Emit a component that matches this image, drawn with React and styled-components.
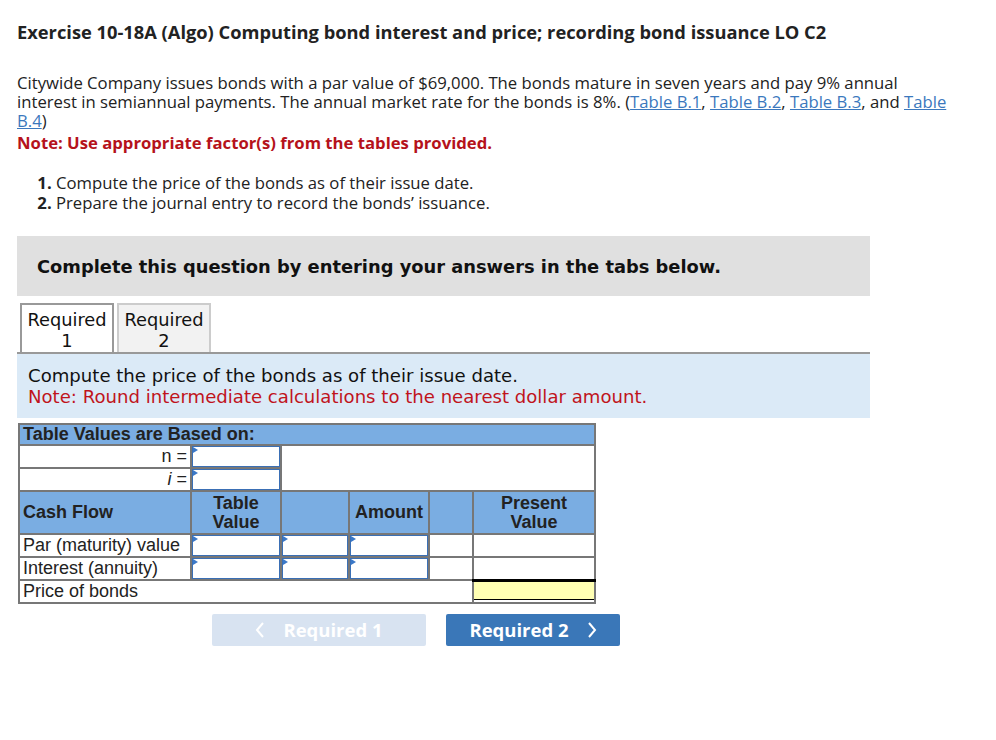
import styled, { createGlobalStyle } from 'styled-components';

const GlobalStyle = createGlobalStyle`
  body {
    margin: 0;
    background: #fff;
  }
`;

const Page = styled.div`
  padding: 20px 0 0 17px;
  width: 853px;
  font-family: 'Open Sans', Lato, sans-serif;
  color: #222;
`;

const Title = styled.h1`
  margin: 0;
  font-size: 18.3px;
  font-weight: 700;
  line-height: 24px;
`;

const Intro = styled.p`
  margin: 29px 0 0;
  width: 940px;
  font-size: 16.7px;
  line-height: 19px;
`;

const TableLink = styled.a`
  color: #3b78bd;
  text-decoration: underline;
`;

const Note = styled.div`
  margin-top: 3px;
  color: #b5121b;
  font-weight: 700;
  font-size: 16.7px;
  line-height: 19px;
`;

const Steps = styled.ol`
  margin: 21px 0 0;
  padding-left: 39px;
  font-size: 16.7px;
  line-height: 20px;
  li::marker {
    font-weight: 700;
  }
`;

const Banner = styled.div`
  margin-top: 23px;
  height: 60px;
  display: flex;
  align-items: center;
  padding-left: 20px;
  background: #e0e0e0;
  font-family: 'DejaVu Sans', Verdana, sans-serif;
  font-weight: 700;
  font-size: 17.85px;
  color: #111;
`;

const TabBar = styled.div`
  margin-top: 7px;
  display: flex;
  gap: 3px;
  padding-left: 3px;
  border-bottom: 2px solid #999;
`;

const Tab = styled.div`
  width: 94px;
  height: 49px;
  box-sizing: border-box;
  border: 2px solid ${(p) => (p.$active ? '#999' : '#ccc')};
  border-bottom: none;
  background: ${(p) => (p.$active ? '#fff' : '#f2f2f2')};
  font-family: 'DejaVu Sans', Verdana, sans-serif;
  font-size: 17.8px;
  line-height: 21px;
  text-align: center;
  color: #111;
  padding-top: 4px;
`;

const Instruction = styled.div`
  background: #dbeaf7;
  padding: 11px 11px 10px;
  height: 64px;
  box-sizing: border-box;
  font-family: 'DejaVu Sans', Verdana, sans-serif;
  font-size: 18.1px;
  line-height: 21px;
  color: #111;
`;

const RedLine = styled.div`
  color: #c0141c;
`;

const Grid = styled.table`
  margin-top: 5px;
  margin-left: 1px;
  border-collapse: collapse;
  width: 576px;
  table-layout: fixed;
  font-family: 'Liberation Sans', Arial, sans-serif;
  font-size: 18px;
  color: #222;
  td,
  th {
    border: 2px solid #777;
    padding: 0;
    height: 19px;
  }
`;

const HeadCell = styled.th`
  background: #7aade2;
  font-weight: 700;
  text-align: ${(p) => p.$align || 'center'};
  padding-left: ${(p) => (p.$align === 'left' ? '3px' : '0')} !important;
  line-height: 19px;
  vertical-align: middle;
`;

const TallHeadRow = styled.tr`
  th {
    height: 41px;
  }
`;

const Label = styled.td`
  text-align: ${(p) => p.$align || 'left'};
  padding: 0 3px !important;
  line-height: 19px;
  white-space: nowrap;
`;

const InputCell = styled.td`
  padding: 0 !important;
`;

const Entry = styled.div`
  position: relative;
  height: 19px;
  border: 1.5px solid #3a6fb5;
  background: #fff;
  &::before {
    content: '';
    position: absolute;
    left: 0;
    top: 0;
    border-top: 3px solid transparent;
    border-bottom: 3px solid transparent;
    border-left: 5px solid #3a78c8;
  }
`;

const Total = styled.td`
  background: #ffffb3;
  border-top: 3px solid #000 !important;
  box-shadow: inset 0 -2px 0 #fff, inset 0 -3px 0 #000;
  height: 20px !important;
`;

const Nav = styled.div`
  margin-top: 10px;
  margin-left: 195px;
  display: flex;
  gap: 20px;
`;

const NavButton = styled.button`
  height: 32px;
  width: ${(p) => p.$w}px;
  border: none;
  border-radius: 2px;
  background: ${(p) => (p.$disabled ? '#d8e3f1' : '#3a77b8')};
  color: #fff;
  font-family: 'Open Sans', Lato, sans-serif;
  font-weight: 700;
  font-size: 18.5px;
  display: flex;
  align-items: center;
  justify-content: center;
  gap: 18px;
  cursor: ${(p) => (p.$disabled ? 'default' : 'pointer')};
`;

const Chevron = ({ dir }) => (
  <svg width="10" height="16" viewBox="0 0 10 16">
    <path
      d={dir === 'left' ? 'M8 1 L2 8 L8 15' : 'M2 1 L8 8 L2 15'}
      fill="none"
      stroke="#fff"
      strokeWidth="2"
    />
  </svg>
);

const InputRow = ({ label }) => (
  <tr>
    <Label>{label}</Label>
    <InputCell>
      <Entry />
    </InputCell>
    <InputCell>
      <Entry />
    </InputCell>
    <InputCell>
      <Entry />
    </InputCell>
    <td />
    <td />
  </tr>
);

export default function App() {
  return (
    <>
      <GlobalStyle />
      <Page>
        <Title>
          Exercise 10-18A (Algo) Computing bond interest and price; recording bond issuance LO C2
        </Title>
        <Intro>
          Citywide Company issues bonds with a par value of $69,000. The bonds mature in seven years and pay 9% annual
          <br />
          interest in semiannual payments. The annual market rate for the bonds is 8%. (<TableLink>Table B.1</TableLink>,{' '}
          <TableLink>Table B.2</TableLink>, <TableLink>Table B.3</TableLink>, and <TableLink>Table B.4</TableLink>)
          <Note>Note: Use appropriate factor(s) from the tables provided.</Note>
        </Intro>
        <Steps>
          <li>Compute the price of the bonds as of their issue date.</li>
          <li>Prepare the journal entry to record the bonds’ issuance.</li>
        </Steps>
        <Banner>Complete this question by entering your answers in the tabs below.</Banner>
        <TabBar>
          <Tab $active>
            Required
            <br />1
          </Tab>
          <Tab>
            Required
            <br />2
          </Tab>
        </TabBar>
        <Instruction>
          Compute the price of the bonds as of their issue date.
          <RedLine>Note: Round intermediate calculations to the nearest dollar amount.</RedLine>
        </Instruction>
        <Grid>
          <colgroup>
            <col style={{ width: 172 }} />
            <col style={{ width: 90 }} />
            <col style={{ width: 68 }} />
            <col style={{ width: 80 }} />
            <col style={{ width: 44 }} />
            <col style={{ width: 122 }} />
          </colgroup>
          <tbody>
            <tr>
              <HeadCell colSpan={6} $align="left">
                Table Values are Based on:
              </HeadCell>
            </tr>
            <tr>
              <Label $align="right">n =</Label>
              <InputCell>
                <Entry />
              </InputCell>
              <td colSpan={4} rowSpan={2} />
            </tr>
            <tr>
              <Label $align="right">
                <i>i</i> =
              </Label>
              <InputCell>
                <Entry />
              </InputCell>
            </tr>
            <TallHeadRow>
              <HeadCell $align="left">Cash Flow</HeadCell>
              <HeadCell>
                Table
                <br />
                Value
              </HeadCell>
              <HeadCell />
              <HeadCell>Amount</HeadCell>
              <HeadCell />
              <HeadCell>
                Present
                <br />
                Value
              </HeadCell>
            </TallHeadRow>
            <InputRow label="Par (maturity) value" />
            <InputRow label="Interest (annuity)" />
            <tr>
              <Label colSpan={5}>Price of bonds</Label>
              <Total />
            </tr>
          </tbody>
        </Grid>
        <Nav>
          <NavButton $disabled $w={214}>
            <Chevron dir="left" />
            Required 1
          </NavButton>
          <NavButton $w={174}>
            Required 2
            <Chevron dir="right" />
          </NavButton>
        </Nav>
      </Page>
    </>
  );
}
